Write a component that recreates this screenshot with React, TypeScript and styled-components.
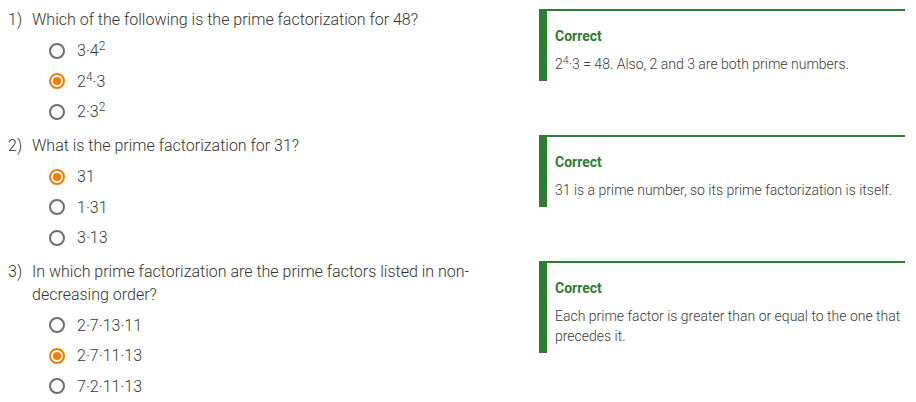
import React from "react";
import styled, { createGlobalStyle } from "styled-components";

const Global = createGlobalStyle`
  html, body { margin: 0; padding: 0; background: #fff; }
  body { padding: 9px 8px 8px; font-family: Roboto, "Noto Sans", Arial, sans-serif; }
`;

const Page = styled.div`
  display: flex;
  flex-direction: column;
  gap: 8px;
`;

const Block = styled.div`
  display: grid;
  grid-template-columns: 531px 366px;
  align-items: start;
`;

const Left = styled.div`
  padding-right: 20px;
`;

const Question = styled.div`
  display: flex;
  font-size: 16px;
  font-weight: 300;
  line-height: 22.5px;
  color: #333;
`;

const Num = styled.span`
  flex: 0 0 24px;
`;

const QText = styled.span`
  flex: 1;
`;

const Options = styled.div`
  display: flex;
  flex-direction: column;
  padding: 4px 0 0 41px;
`;

const Option = styled.label`
  display: flex;
  align-items: center;
  height: 30.5px;
  gap: 12px;
  font-size: 16px;
  font-weight: 300;
  color: #3a3a3a;
`;

const Radio = styled.span<{ $checked?: boolean }>`
  box-sizing: border-box;
  width: 16px;
  height: 16px;
  border-radius: 50%;
  border: 2px solid ${(p) => (p.$checked ? "#f57c00" : "#6f6f6f")};
  display: flex;
  align-items: center;
  justify-content: center;
  flex: 0 0 auto;
  &::after {
    content: "";
    display: ${(p) => (p.$checked ? "block" : "none")};
    width: 8px;
    height: 8px;
    border-radius: 50%;
    background: #f57c00;
  }
`;

const Sup = styled.sup`
  font-size: 0.75em;
  vertical-align: 0;
  position: relative;
  top: -0.5em;
  line-height: 0;
`;

const Feedback = styled.div`
  border-top: 2px solid #2e7d32;
  border-left: 8px solid #2e7d32;
  padding: 15px 2px 7px 8px;
  font-size: 14px;
  line-height: 20px;
`;

const FTitle = styled.div`
  font-weight: 700;
  color: #2e7d32;
  margin-bottom: 8px;
`;

const FText = styled.div`
  color: #3a3a3a;
  font-weight: 300;
`;

type Opt = { label: React.ReactNode; checked?: boolean };

const questions: { n: string; q: string; opts: Opt[]; fb: React.ReactNode }[] = [
  {
    n: "1)",
    q: "Which of the following is the prime factorization for 48?",
    opts: [
      { label: <>3·4<Sup>2</Sup></> },
      { label: <>2<Sup>4</Sup>·3</>, checked: true },
      { label: <>2·3<Sup>2</Sup></> },
    ],
    fb: <>2<Sup>4</Sup>·3 = 48. Also, 2 and 3 are both prime numbers.</>,
  },
  {
    n: "2)",
    q: "What is the prime factorization for 31?",
    opts: [{ label: "31", checked: true }, { label: "1·31" }, { label: "3·13" }],
    fb: "31 is a prime number, so its prime factorization is itself.",
  },
  {
    n: "3)",
    q: "In which prime factorization are the prime factors listed in non-decreasing order?",
    opts: [{ label: "2·7·13·11" }, { label: "2·7·11·13", checked: true }, { label: "7·2·11·13" }],
    fb: "Each prime factor is greater than or equal to the one that precedes it.",
  },
];

export default function App() {
  return (
    <>
      <Global />
      <Page>
        {questions.map((q) => (
          <Block key={q.n}>
            <Left>
              <Question>
                <Num>{q.n}</Num>
                <QText>{q.q}</QText>
              </Question>
              <Options>
                {q.opts.map((o, i) => (
                  <Option key={i}>
                    <Radio $checked={o.checked} />
                    <span>{o.label}</span>
                  </Option>
                ))}
              </Options>
            </Left>
            <Feedback>
              <FTitle>Correct</FTitle>
              <FText>{q.fb}</FText>
            </Feedback>
          </Block>
        ))}
      </Page>
    </>
  );
}
